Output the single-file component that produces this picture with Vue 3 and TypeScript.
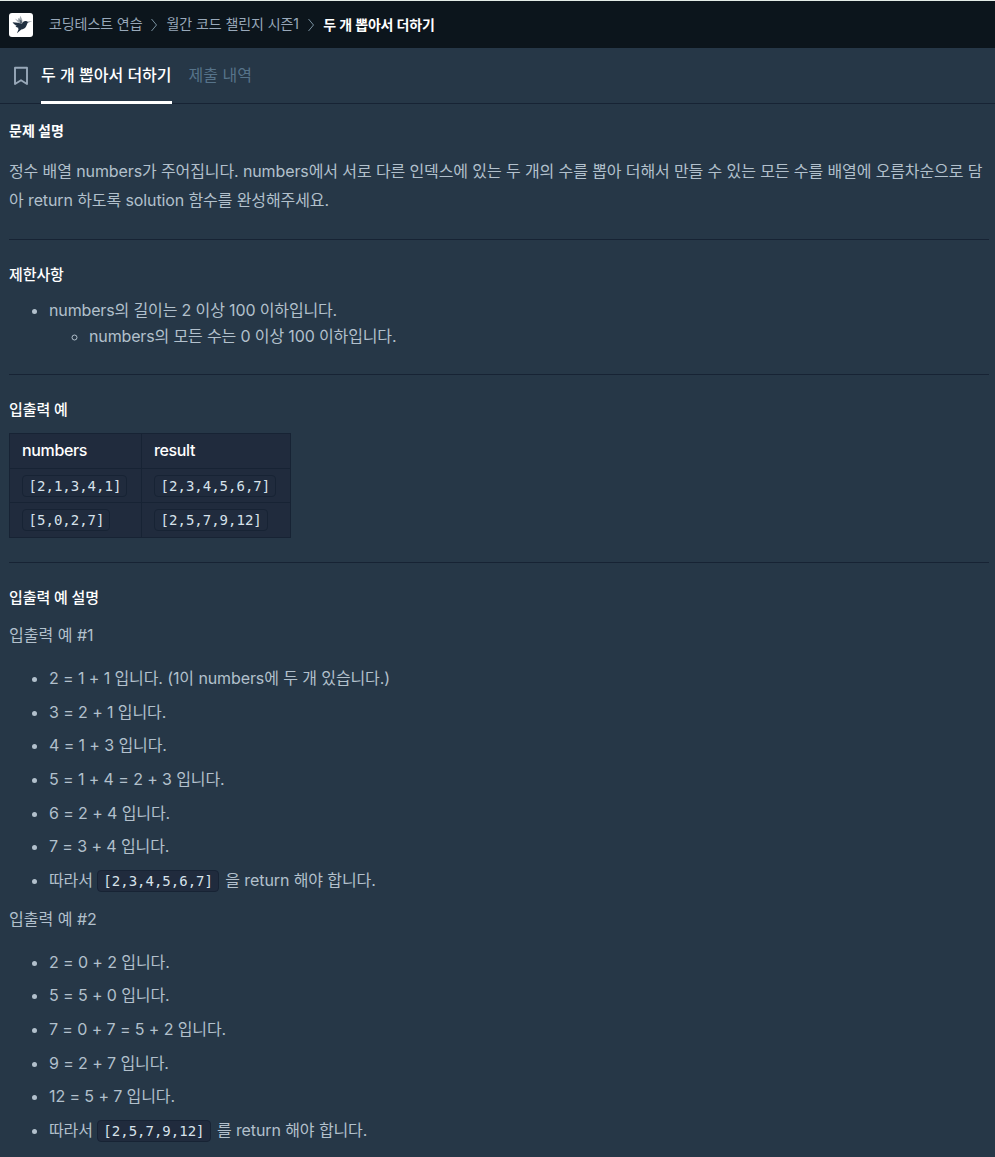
<script setup lang="ts">
interface Part {
  text: string
  code?: boolean
}

const crumbs: string[] = ['코딩테스트 연습', '월간 코드 챌린지 시즌1']

const rows: string[][] = [
  ['[2,1,3,4,1]', '[2,3,4,5,6,7]'],
  ['[5,0,2,7]', '[2,5,7,9,12]'],
]

const examples: { title: string; items: Part[][] }[] = [
  {
    title: '입출력 예 #1',
    items: [
      [{ text: '2 = 1 + 1 입니다. (1이 numbers에 두 개 있습니다.)' }],
      [{ text: '3 = 2 + 1 입니다.' }],
      [{ text: '4 = 1 + 3 입니다.' }],
      [{ text: '5 = 1 + 4 = 2 + 3 입니다.' }],
      [{ text: '6 = 2 + 4 입니다.' }],
      [{ text: '7 = 3 + 4 입니다.' }],
      [{ text: '따라서 ' }, { text: '[2,3,4,5,6,7]', code: true }, { text: ' 을 return 해야 합니다.' }],
    ],
  },
  {
    title: '입출력 예 #2',
    items: [
      [{ text: '2 = 0 + 2 입니다.' }],
      [{ text: '5 = 5 + 0 입니다.' }],
      [{ text: '7 = 0 + 7 = 5 + 2 입니다.' }],
      [{ text: '9 = 2 + 7 입니다.' }],
      [{ text: '12 = 5 + 7 입니다.' }],
      [{ text: '따라서 ' }, { text: '[2,5,7,9,12]', code: true }, { text: ' 를 return 해야 합니다.' }],
    ],
  },
]
</script>

<template>
  <div class="page">
    <header class="nav">
      <svg class="logo" viewBox="0 0 24 24" width="24" height="24">
        <rect width="24" height="24" rx="3" fill="#fff" />
        <path d="M5.800 5.400 9 7.200l.2-2.200 1.300.7.9-3 2 4.400-.2 3.700L9.500 9.800z" fill="#a3abb2" />
        <path d="M10.400 6.600l2.300 1 .8 3-2.300.2z" fill="#5d6975" />
        <path d="M3.600 9.300c3.600.2 7 .7 9.200 1.800.9-2.100 2.100-3.200 3.700-3.100 1 0 1.700.5 2.300.8l4.300-.2-4.200 1c-.8 1.200-1.200 3.400-2.500 4.800-1 1.100-2.300 1.800-4.100 2.200L8 20.200l1.600-4.300c-.5-.2-.6-.7-.2-1.100-1.700-.4-2.700-1.200-3.100-2 .5.100 1.100.1 1.500 0-1.900-.8-3.500-2-4.200-3.500z" fill="#202f40" />
      </svg>
      <nav class="crumbs">
        <template v-for="crumb in crumbs" :key="crumb">
          <a class="crumb">{{ crumb }}</a>
          <svg class="chevron" viewBox="0 0 8 14" width="8" height="14">
            <path d="M1.500 1l5 6-5 6" fill="none" stroke="#78909f" stroke-width="1" />
          </svg>
        </template>
        <span class="crumb current">두 개 뽑아서 더하기</span>
      </nav>
    </header>

    <div class="tabs">
      <svg class="bookmark" viewBox="0 0 16 20" width="16" height="20">
        <path d="M2 1.800h12v16.200l-6-3.800-6 3.800z" fill="none" stroke="#98a8b9" stroke-width="1.900" stroke-linejoin="round" />
      </svg>
      <span class="tab active">두 개 뽑아서 더하기</span>
      <span class="tab">제출 내역</span>
    </div>

    <main class="guide">
      <h6>문제 설명</h6>
      <p class="intro">정수 배열 numbers가 주어집니다. numbers에서 서로 다른 인덱스에 있는 두 개의 수를 뽑아 더해서 만들 수 있는 모든 수를 배열에 오름차순으로 담<br />아 return 하도록 solution 함수를 완성해주세요.</p>
      <hr />
      <h5>제한사항</h5>
      <ul class="limits">
        <li>
          numbers의 길이는 2 이상 100 이하입니다.
          <ul>
            <li>numbers의 모든 수는 0 이상 100 이하입니다.</li>
          </ul>
        </li>
      </ul>
      <hr />
      <h5>입출력 예</h5>
      <table>
        <thead>
          <tr><th>numbers</th><th>result</th></tr>
        </thead>
        <tbody>
          <tr v-for="row in rows" :key="row[0]">
            <td v-for="cell in row" :key="cell"><code>{{ cell }}</code></td>
          </tr>
        </tbody>
      </table>
      <hr />
      <h5>입출력 예 설명</h5>
      <template v-for="example in examples" :key="example.title">
        <p class="title">{{ example.title }}</p>
        <ul class="cases">
          <li v-for="(item, i) in example.items" :key="i"><template v-for="(part, j) in item" :key="j"><code v-if="part.code">{{ part.text }}</code><template v-else>{{ part.text }}</template></template></li>
        </ul>
      </template>
    </main>
  </div>
</template>

<style>
body {
  margin: 0;
  background: #263747;
}
</style>

<style scoped>
.page {
  box-sizing: border-box;
  height: 1157px;
  overflow: hidden;
  border-top: 1px solid #e3ece6;
  background: #263747;
  color: #b2c0cc;
  font-family: Inter, "Noto Sans CJK KR", sans-serif;
  font-size: 16px;
}
.nav {
  display: flex;
  align-items: center;
  height: 47px;
  padding-left: 9px;
  background: #0c151c;
}
.crumbs {
  display: flex;
  align-items: center;
  margin-left: 16px;
}
.crumb {
  padding-bottom: 2px;
  color: #98a8b9;
  font-size: 14px;
  line-height: 24px;
  letter-spacing: -0.08px;
  white-space: nowrap;
}
.current {
  padding-bottom: 0;
  color: #fff;
  font-weight: 700;
  letter-spacing: -0.15px;
}
.chevron {
  margin: 0 8px;
}
.chevron + .current {
  margin-left: 0.5px;
}
.tabs {
  box-sizing: border-box;
  display: flex;
  height: 56px;
  padding-left: 13px;
  border-bottom: 1px solid #172334;
}
.bookmark {
  margin: 18px 12px 0 0;
}
.tab {
  box-sizing: border-box;
  height: 56px;
  margin-right: 17px;
  font-size: 16px;
  line-height: 55px;
  color: #56738a;
  white-space: nowrap;
}
.active {
  border-bottom: 3px solid #fff;
  color: #fff;
  font-weight: 500;
}
.guide {
  padding: 15px 6px 0 9px;
}
h5,
h6 {
  margin: 0;
  color: #fff;
  line-height: 24px;
}
h5 {
  font-size: 15px;
  font-weight: 500;
  letter-spacing: -0.1px;
}
h6 {
  font-size: 14px;
  font-weight: 700;
}
hr {
  height: 1px;
  margin: 24px 0 23px;
  border: 0;
  background: #172334;
}
p {
  margin: 0;
  white-space: nowrap;
}
.intro {
  margin-top: 14px;
  line-height: 29px;
  letter-spacing: -0.11px;
}
ul {
  margin: 0;
  padding-left: 40px;
}
.limits {
  margin-top: 10px;
  padding-bottom: 1px;
  line-height: 26px;
  letter-spacing: -0.14px;
}
table {
  border-collapse: collapse;
  width: 282px;
  margin-top: 11px;
  background: #202b3d;
  table-layout: fixed;
}
th,
td {
  box-sizing: border-box;
  height: 34px;
  padding: 0 12px 1px;
  border: 1px solid #172334;
  text-align: left;
  line-height: 24px;
}
tr:last-child td {
  height: 35px;
  padding-bottom: 2px;
}
thead th {
  height: 35px;
  padding-bottom: 2px;
  color: #fff;
  font-weight: 500;
  letter-spacing: -0.35px;
}
th:first-child {
  width: 132px;
}
code {
  display: inline-block;
  box-sizing: border-box;
  height: 22px;
  padding: 0 5px 0 5.6px;
  border: 1px solid #172334;
  border-radius: 4px;
  background: #202b3d;
  color: #d7e2eb;
  font-family: "DejaVu Sans Mono", monospace;
  font-size: 14px;
  line-height: 21px;
  letter-spacing: 0;
  vertical-align: middle;
}
.title {
  margin-top: 12px;
  line-height: 26px;
}
.cases {
  margin-top: 14px;
  letter-spacing: -0.1px;
}
.cases li {
  height: 33.67px;
  line-height: 32px;
}
.cases code {
  position: relative;
  top: -1px;
  margin: 0 2px 0 -0.5px;
}
.cases + .title {
  margin-top: 8px;
}
</style>
